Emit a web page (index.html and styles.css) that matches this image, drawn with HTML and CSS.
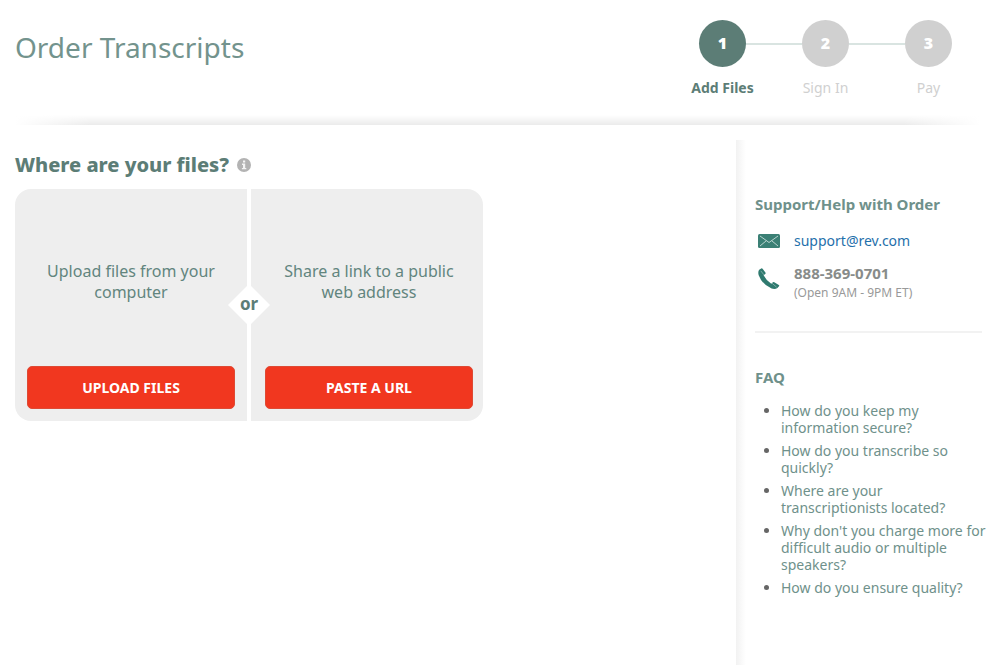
FILE: index.html
```html
<!DOCTYPE html>
<html lang="en">

<head>
  <meta charset="UTF-8">
  <meta name="viewport" content="width=device-width, initial-scale=1.0">
  <title>Order Transcripts</title>
  <link rel="stylesheet" href="styles.css">
</head>

<body>
  <header class="header">
    <h1>Order Transcripts</h1>
    <ol class="steps">
      <li class="step active">
        <span class="step-number">1</span>
        <span class="step-label">Add Files</span>
      </li>
      <li class="step">
        <span class="step-number">2</span>
        <span class="step-label">Sign In</span>
      </li>
      <li class="step">
        <span class="step-number">3</span>
        <span class="step-label">Pay</span>
      </li>
    </ol>
  </header>

  <div class="layout">
    <main class="main">
      <div class="title-row">
        <h2>Where are your files?</h2>
        <button type="button" class="info" aria-label="More information">
          <svg width="14" height="14" viewBox="0 0 14 14">
            <circle cx="7" cy="7" r="7" fill="#b3b3b3"/>
            <path d="M6 2.5h2.2v2H6zM5 5.6h3.2v4.3H9.300v1.300H4.900V9.900H6V6.900H5z" fill="#f4f4f4"/>
          </svg>
        </button>
      </div>
      <div class="sources">
        <section class="source">
          <p>Upload files from your computer</p>
          <button type="button" class="btn">UPLOAD FILES</button>
        </section>
        <section class="source">
          <p>Share a link to a public web address</p>
          <button type="button" class="btn">PASTE A URL</button>
        </section>
        <div class="or">
          <svg width="42" height="42" viewBox="0 0 42 42">
            <path d="M21 0L42 21L21 42L0 21z" fill="#fff"/>
          </svg>
          <span>or</span>
        </div>
      </div>
    </main>

    <aside class="sidebar">
      <section class="support">
        <h3>Support/Help with Order</h3>
        <div class="contact">
          <svg width="22" height="14" viewBox="0 0 22 14">
            <rect width="22" height="14" rx="1.500" fill="#3b8075"/>
            <path d="M2 2l9 6.500L20 2M2 12l6.300-5.300M20 12l-6.300-5.300" fill="none" stroke="#b9d5d0" stroke-width="1"/>
          </svg>
          <a href="mailto:support@rev.com">support@rev.com</a>
        </div>
        <div class="contact phone">
          <svg width="22" height="22" viewBox="0 0 22 22">
            <path d="M1.200 1.800L3.200.4Q4 0 4.600.8L7.400 4.600Q7.900 5.400 7.200 6L5.600 7.300Q8 12.300 13.300 15.700L14.900 14.300Q15.600 13.700 16.300 14.200L20.800 17Q21.600 17.600 21 18.300L19.400 20Q17 21.700 13.600 20.500Q4.200 16.700.7 7.300Q-.3 3.600 1.200 1.800z" fill="#2f7a6f"/>
            <path d="M2.800 2.900L6 6.900M14 15.200L18.600 19.200" fill="none" stroke="#8fb8b2" stroke-width=".8"/>
          </svg>
          <div>
            <strong>888-369-0701</strong>
            <small>(Open 9AM - 9PM ET)</small>
          </div>
        </div>
      </section>
      <section class="faq">
        <h3>FAQ</h3>
        <ul>
          <li><a href="#">How do you keep my information secure?</a></li>
          <li><a href="#">How do you transcribe so quickly?</a></li>
          <li><a href="#">Where are your transcriptionists located?</a></li>
          <li><a href="#">Why don't you charge more for difficult audio or multiple speakers?</a></li>
          <li><a href="#">How do you ensure quality?</a></li>
        </ul>
      </section>
    </aside>
  </div>
</body>

</html>
```
FILE: styles.css
```css
* {
  box-sizing: border-box;
}

body {
  margin: 0;
  min-height: 100vh;
  display: flex;
  flex-direction: column;
  font-family: 'Noto Sans', 'Open Sans', sans-serif;
  font-size: 14px;
  color: #6f918b;
  background: #fff;
}

h1, h2, h3, p, ul, ol {
  margin: 0;
  padding: 0;
}

a {
  text-decoration: none;
}

svg {
  display: block;
}

.header {
  position: relative;
  display: flex;
  justify-content: space-between;
  align-items: flex-start;
  height: 125px;
  padding: 20px 20px 0 15px;
}

/* soft shadow that fades out at both ends */
.header::after {
  content: '';
  position: absolute;
  left: 15px;
  right: 20px;
  bottom: 0;
  height: 10px;
  background: linear-gradient(90deg, #fff, transparent 8%, transparent 92%, #fff), linear-gradient(#fff, #ebebeb);
}

h1 {
  padding-top: 7px;
  font-size: 28px;
  line-height: 40px;
  font-weight: 400;
  color: #73938d;
}

.steps {
  display: flex;
  list-style: none;
}

.step {
  position: relative;
  width: 103px;
  display: flex;
  flex-direction: column;
  align-items: center;
  gap: 10px;
  color: #d0d0d0;
}

.step + .step::before {
  content: '';
  position: absolute;
  top: 23px;
  left: -28px;
  width: 56px;
  height: 2px;
  background: #d9e4e1;
}

.step-number {
  width: 47px;
  height: 47px;
  border-radius: 50%;
  background: #d0d0d0;
  color: #fff;
  font-size: 16px;
  line-height: 47px;
  font-weight: 900;
  text-align: center;
}

.step-label {
  font-size: 14px;
  line-height: 22px;
}

.step.active {
  color: #5c7d76;
}

.step.active .step-number {
  background: #5c7d76;
}

.step.active .step-label {
  font-weight: 700;
}

.layout {
  flex: 1;
  display: grid;
  grid-template-columns: 1fr 252px;
  padding: 15px 12px 0 15px;
}

.main {
  padding-top: 10px;
}

.title-row {
  display: flex;
  align-items: center;
  gap: 8px;
  margin-bottom: 9px;
}

h2 {
  font-size: 20px;
  line-height: 30px;
  font-weight: 800;
  color: #5c7d76;
}

.info {
  padding: 0;
  border: none;
  background: none;
  cursor: pointer;
}

.sources {
  position: relative;
  display: grid;
  grid-template-columns: 1fr 1fr;
  gap: 4px;
  max-width: 468px;
  border-radius: 16px;
  overflow: hidden;
}

.source {
  display: flex;
  flex-direction: column;
  justify-content: space-between;
  height: 232px;
  padding: 72px 12px 12px;
  background: #eee;
}

.source:nth-child(2) {
  padding: 72px 10px 12px 14px;
}

.source p {
  padding: 0 16px;
  font-size: 16px;
  line-height: 21px;
  text-align: center;
  color: #62857e;
}

.btn {
  height: 43px;
  border: 1px solid #de4a34;
  border-radius: 5px;
  background: #f1371f;
  color: #fff;
  font-family: inherit;
  font-size: 14px;
  font-weight: 700;
  cursor: pointer;
}

.or {
  position: absolute;
  top: 50%;
  left: 50%;
  transform: translate(-50%, -50%);
}

.or span {
  position: absolute;
  inset: 0;
  font-size: 17px;
  line-height: 40px;
  font-weight: 700;
  text-align: center;
  color: #5c7d76;
}

.sidebar {
  padding: 51px 0 0 19px;
  background: linear-gradient(90deg, #f2f2f2, #fff 10px);
}

h3 {
  font-size: 15px;
  line-height: 26px;
  font-weight: 700;
}

.support {
  margin-right: 6px;
  padding-bottom: 28px;
  border-bottom: 2px solid #f2f2f2;
}

.contact {
  display: flex;
  align-items: center;
  gap: 14px;
  margin-top: 14px;
  padding-left: 3px;
  line-height: 20px;
}

.contact.phone {
  align-items: flex-start;
  margin-top: 12px;
}

.phone svg {
  margin-top: 5px;
}

.contact a {
  color: #1f70ab;
}

.contact strong,
.contact small {
  display: block;
}

.contact strong {
  font-size: 15px;
  color: #888c8a;
}

.contact small {
  font-size: 12px;
  color: #999;
}

.faq {
  padding-top: 31px;
}

.faq ul {
  margin-top: 12px;
  padding-left: 26px;
}

.faq li {
  margin-bottom: 6px;
  line-height: 17px;
}

.faq li::marker {
  color: #666;
}

.faq a {
  color: #6f918b;
}
```
